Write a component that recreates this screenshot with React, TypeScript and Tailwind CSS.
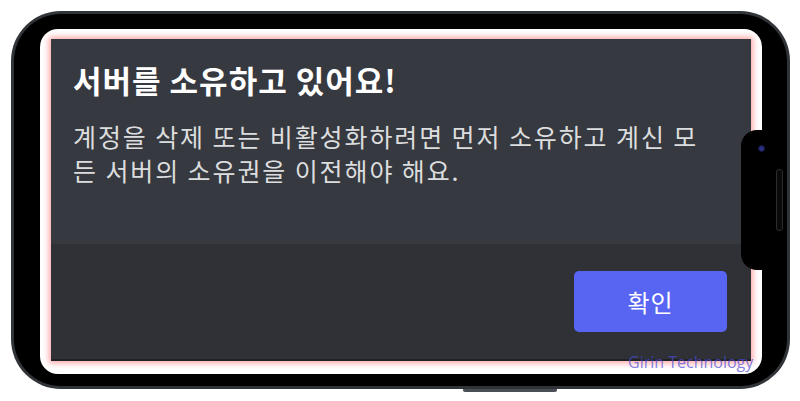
import React from "react";

const KR = { fontFamily: '"Noto Sans CJK KR", "Noto Sans", sans-serif' };

export default function App() {
  return (
    <div className="w-[800px] h-[401px] bg-white overflow-hidden pl-[11px] pt-[11px]" style={KR}>
      {/* phone body */}
      <div className="relative w-[779px] h-[378px] rounded-[50px] bg-[#303438] p-[3px]">
        <div className="w-full h-full rounded-[47px] bg-black pl-[26px] pt-[15px] pr-[25px] pb-[12px]">
          <div className="w-full h-full rounded-[18px] bg-white pl-[11px] pt-[10px] pr-[11px] pb-[13px]">
            <div className="w-full h-full flex flex-col bg-[#36393f] shadow-[0_0_6px_2px_rgba(255,90,90,0.55)]">
              <div className="h-[205px] pl-[22px] pr-[30px] pt-[21px]">
                <h1 className="text-[31px] font-bold text-white leading-[40px] tracking-[1px]">
                  서버를 소유하고 있어요!
                </h1>
                <p className="mt-[19px] text-[25px] leading-[34px] tracking-[1.9px] text-[#dcddde]">
                  계정을 삭제 또는 비활성화하려면 먼저 소유하고 계신 모든 서버의 소유권을 이전해야 해요.
                </p>
              </div>
              <div className="flex-1 bg-[#2f3136] border-b-2 border-[#202225] flex items-start justify-end pt-[27px] pr-[24px]">
                <button className="w-[153px] h-[61px] rounded-[5px] bg-[#5865f2] text-white text-[24px] tracking-[1px]">
                  확인
                </button>
              </div>
            </div>
          </div>
        </div>

        {/* camera notch on the right */}
        <div className="absolute left-[730px] top-[119px] w-[44px] h-[140px] bg-black rounded-l-[16px]" />
        <div className="absolute left-[747px] top-[134px] w-[7px] h-[7px] rounded-full bg-[#2a2f80] border border-[#11133a]" />
        {/* side button */}
        <div className="absolute left-[765px] top-[158px] w-[7px] h-[62px] rounded-[3px] border border-[#2a2d30] bg-[#0a0a0a]" />
        {/* bottom button */}
        <div className="absolute left-[452px] top-[378px] w-[94px] h-[3px] bg-[#4a4f55] rounded-b-[2px]" />

        {/* watermark */}
        <div
          className="absolute left-[617px] top-[339px] text-[16px] text-[#4a4ad8]/70"
          style={{ fontFamily: '"Open Sans", "Noto Sans", sans-serif' }}
        >
          Girin Technology
        </div>
      </div>
    </div>
  );
}
